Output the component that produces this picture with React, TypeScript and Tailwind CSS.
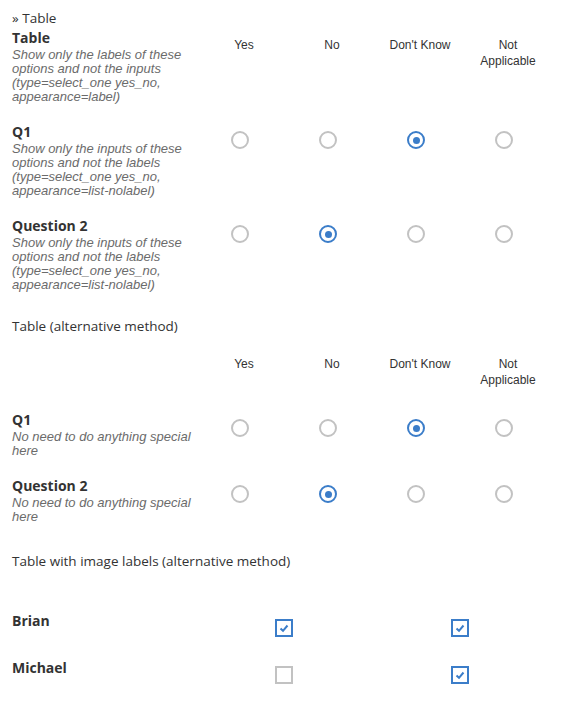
import React from 'react';

const options = ['Yes', 'No', "Don't Know", 'Not Applicable'];

const label = "font-['Open_Sans',sans-serif] text-[14px] leading-[20px] font-bold text-[#333]";
const hint = "font-['Liberation_Sans',Arial,sans-serif] italic text-[13px] leading-[14px] text-[#6b6b6b]";
const title = "font-['Open_Sans',sans-serif] text-[13.5px] leading-[20px] text-[#333]";

function Radio({ checked }: { checked?: boolean }) {
  return (
    <span
      className={`w-[18px] h-[18px] rounded-full border-2 flex items-center justify-center bg-white ${
        checked ? 'border-[#3b7dc9]' : 'border-[#c2c2c2]'
      }`}
    >
      {checked && <span className="w-[7px] h-[7px] rounded-full bg-[#3b7dc9]" />}
    </span>
  );
}

function Checkbox({ checked }: { checked?: boolean }) {
  return (
    <span
      className={`w-[18px] h-[18px] border-2 flex items-center justify-center bg-white ${
        checked ? 'border-[#3b7dc9]' : 'border-[#c2c2c2]'
      }`}
    >
      {checked && (
        <svg width="10" height="10" viewBox="0 0 10 10">
          <path d="M1.5 5.5 L4 7.8 L8.5 2.5" fill="none" stroke="#3b7dc9" strokeWidth="2" />
        </svg>
      )}
    </span>
  );
}

function HeaderRow({ children, top }: { children?: React.ReactNode; top: string }) {
  return (
    <div className="grid grid-cols-[184px_repeat(4,88px)]">
      <div>{children}</div>
      {options.map((o) => (
        <div
          key={o}
          className={`${top} pl-[12px] pr-[4px] text-center font-['Liberation_Sans',Arial,sans-serif] text-[12px] leading-[16px] text-[#333]`}
        >
          {o}
        </div>
      ))}
    </div>
  );
}

function QuestionRow({ name, hints, selected }: { name: string; hints: string[]; selected: number }) {
  return (
    <div className="grid grid-cols-[184px_repeat(4,88px)]">
      <div>
        <div className={label}>{name}</div>
        <div className={hint}>
          {hints.map((h) => (
            <div key={h}>{h}</div>
          ))}
        </div>
      </div>
      {options.map((o, i) => (
        <div key={o} className="pt-[9px] flex justify-center">
          <Radio checked={i === selected} />
        </div>
      ))}
    </div>
  );
}

const nolabelHints = [
  'Show only the inputs of these',
  'options and not the labels',
  '(type=select_one yes_no,',
  'appearance=list-nolabel)',
];

const altHints = ['No need to do anything special', 'here'];

export default function App() {
  return (
    <div className="bg-white min-h-screen px-3 pt-2 pb-6">
      {/* Table group */}
      <div className={title}>» Table</div>
      <div className="flex flex-col gap-[18px]">
        <HeaderRow top="pt-[9px]">
          <div className={label}>Table</div>
          <div className={hint}>
            <div>Show only the labels of these</div>
            <div>options and not the inputs</div>
            <div>(type=select_one yes_no,</div>
            <div>appearance=label)</div>
          </div>
        </HeaderRow>
        <QuestionRow name="Q1" hints={nolabelHints} selected={2} />
        <QuestionRow name="Question 2" hints={nolabelHints} selected={1} />
      </div>

      {/* Alternative method */}
      <div className={`${title} mt-6`}>Table (alternative method)</div>
      <HeaderRow top="pt-[20px]" />
      <div className="flex flex-col gap-[18px] mt-[22px]">
        <QuestionRow name="Q1" hints={altHints} selected={2} />
        <QuestionRow name="Question 2" hints={altHints} selected={1} />
      </div>

      {/* Image labels */}
      <div className={`${title} mt-[27px]`}>Table with image labels (alternative method)</div>
      <div className="mt-10">
        {[
          { name: 'Brian', values: [true, true] },
          { name: 'Michael', values: [false, true] },
        ].map((r) => (
          <div key={r.name} className="grid grid-cols-[184px_176px_176px] h-[47px]">
            <div className={label}>{r.name}</div>
            {r.values.map((v, i) => (
              <div key={i} className="pt-2 flex justify-center">
                <Checkbox checked={v} />
              </div>
            ))}
          </div>
        ))}
      </div>
    </div>
  );
}
